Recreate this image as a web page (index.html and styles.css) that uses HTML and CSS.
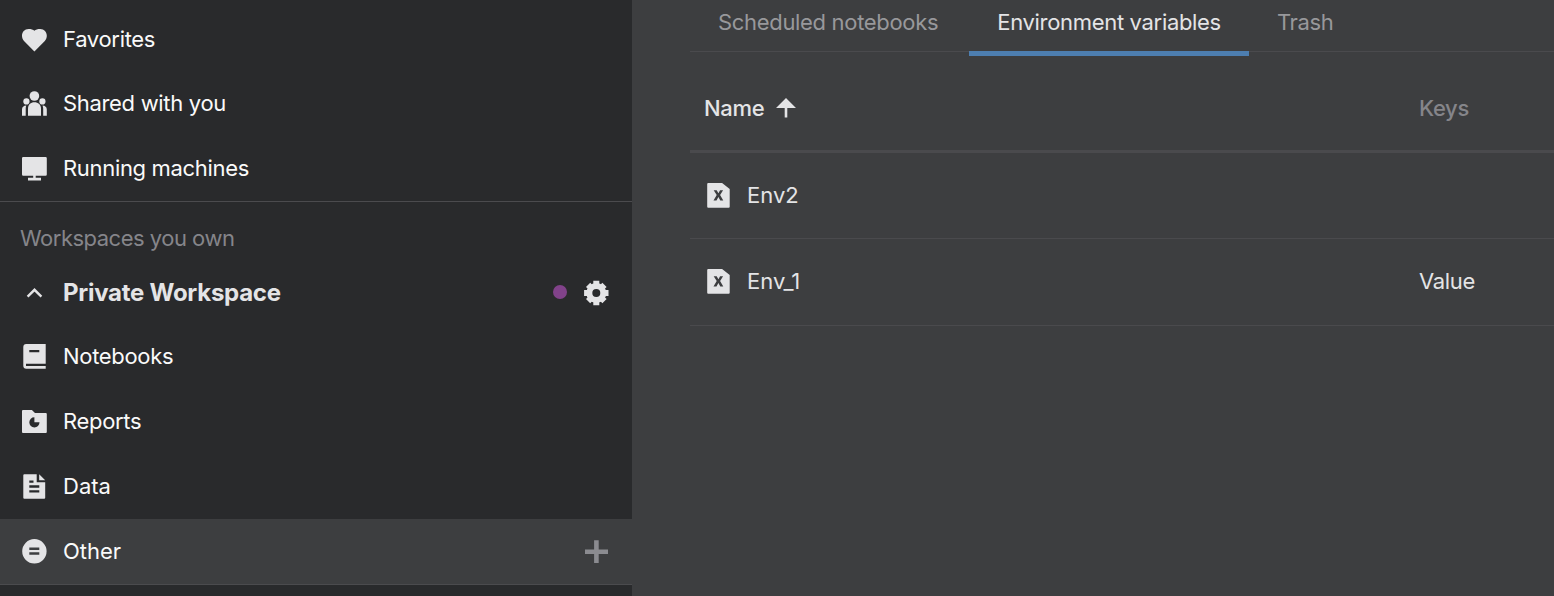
FILE: index.html
```
<!DOCTYPE html>
<html lang="en">
<head>
    <meta charset="UTF-8">
    <meta name="viewport" content="width=device-width, initial-scale=1.0">
    <title>Environment variables</title>
    <link rel="stylesheet" href="styles.css">
</head>
<body>
    <aside class="sidebar">
        <nav class="menu">
            <a class="menu-item first">
                <svg class="icon" viewBox="0 0 27 27"><path d="M13.4 25.5 3 15C-1.2 10.3 1.6 3 7.6 3c2.5 0 4.600.6 5.800 1.800 1.200-1.200 3.300-1.800 5.800-1.800 6 0 8.800 7.300 4.600 12z"/></svg>
                <span>Favorites</span>
            </a>
            <a class="menu-item">
                <svg class="icon" viewBox="0 0 27 27">
                    <circle cx="13.4" cy="6" r="4.8"/>
                    <circle cx="5.4" cy="11.4" r="3.1"/>
                    <circle cx="21.4" cy="11.4" r="3.1"/>
                    <path d="M7 25.7v-7c0-4 2.6-6.4 6.4-6.4s6.6 2.4 6.6 6.4v7z"/>
                    <path d="M1 25.7v-6.2c0-2.3 1.6-3.8 4.3-3.9-.4 1-.6 2-.6 3.1v7zM25.8 25.7v-6.2c0-2.3-1.6-3.8-4.3-3.9.4 1 .7 2 .7 3.1v7z"/>
                </svg>
                <span>Shared with you</span>
            </a>
            <a class="menu-item">
                <svg class="icon" viewBox="0 0 27 27"><path d="M2.2 2h22.4a1.2 1.2 0 0 1 1.2 1.2v16.3a1.2 1.2 0 0 1-1.2 1.2h-9.9v2H20v2.8H7v-2.8h5.2v-2h-10A1.2 1.2 0 0 1 1 19.5V3.2A1.2 1.2 0 0 1 2.2 2z"/></svg>
                <span>Running machines</span>
            </a>
        </nav>

        <section class="workspaces">
            <p class="label">Workspaces you own</p>
            <div class="workspace">
                <svg class="icon chevron" viewBox="0 0 27 27"><path d="m6.6 16.700 6.900-6.900 6.900 6.900"/></svg>
                <strong>Private Workspace</strong>
                <i class="dot"></i>
                <svg class="icon gear" viewBox="0 0 27 27">
                    <circle cx="13.300" cy="13" r="7"/>
                    <path d="M13.300.8v3.500M13.300 21.700v3.500M1.100 13h3.500M22 13h3.500M5.100 4.800l2.200 2.200M19.300 19l2.200 2.200M21.500 4.800 19.300 7M7.300 19l-2.200 2.200"/>
                </svg>
            </div>
            <a class="menu-item">
                <svg class="icon" viewBox="0 0 27 27"><path fill-rule="evenodd" d="M5.300 1h19.400v19.700H5v2.300h19.700v2.700H5.300a3 3 0 0 1-3-3V4a3 3 0 0 1 3-3zM8.300 7v2.300h10V7z"/></svg>
                <span>Notebooks</span>
            </a>
            <a class="menu-item">
                <svg class="icon" viewBox="0 0 27 27"><path fill-rule="evenodd" d="M2 2h8.900l3.100 3h10.800a1 1 0 0 1 1 1v18a1 1 0 0 1-1 1H2a1 1 0 0 1-1-1V3a1 1 0 0 1 1-1zM13.400 9.200a5.100 5.100 0 1 0 5.100 5.100h-5.100z"/></svg>
                <span>Reports</span>
            </a>
            <a class="menu-item short">
                <svg class="icon" viewBox="0 0 27 27">
                    <path fill-rule="evenodd" d="M3.300 1.300h12.400v8h8.500v15.500a1 1 0 0 1-1 1H3.300a1 1 0 0 1-1-1V2.300a1 1 0 0 1 1-1zM8.300 7.500v2.300h4.200V7.500zM8.300 12.300v2.400h10v-2.400zM8.300 17.200v2.400h10v-2.400z"/>
                    <path d="M18.200 1.300l6 6H18.200z"/>
                </svg>
                <span>Data</span>
            </a>
            <a class="menu-item short active">
                <svg class="icon" viewBox="0 0 27 27"><path fill-rule="evenodd" d="M13.4 1.100a12.200 12.200 0 1 0 0 24.400 12.200 12.200 0 0 0 0-24.400zM8.300 9.500v2.400h10V9.500zM8.300 14.300v2.400h10v-2.400z"/></svg>
                <span>Other</span>
                <svg class="icon plus" viewBox="0 0 27 27"><path d="M11.100 2.200h4.600v9.200H25V16h-9.300v9.100h-4.600V16H2v-4.600h9.100z"/></svg>
            </a>
        </section>
    </aside>

    <main class="content">
        <div class="tabs">
            <a class="tab">Scheduled notebooks</a>
            <a class="tab active">Environment variables</a>
            <a class="tab">Trash</a>
        </div>

        <div class="table">
            <div class="row head">
                <div class="cell">
                    Name
                    <svg class="arrow" viewBox="0 0 20 20"><path d="M10 0l10 10h-8.700V19.500H8.700V10H0z"/></svg>
                </div>
                <div class="cell muted">Keys</div>
            </div>
            <div class="row first">
                <div class="cell name">
                    <svg class="icon" viewBox="0 0 27 27"><path fill-rule="evenodd" d="M3.200 1h13.900l7.600 6v17.700a1 1 0 0 1-1 1H3.200a1 1 0 0 1-1-1V2a1 1 0 0 1 1-1zM8.700 8.200l3 4.900-3.200 5.300h3l1.900-3.300 1.900 3.300h3l-3.200-5.300 3-4.900h-3l-1.700 3-1.700-3z"/></svg>
                    <span>Env2</span>
                </div>
                <div class="cell"></div>
            </div>
            <div class="row last">
                <div class="cell name">
                    <svg class="icon" viewBox="0 0 27 27"><path fill-rule="evenodd" d="M3.200 1h13.900l7.600 6v17.700a1 1 0 0 1-1 1H3.200a1 1 0 0 1-1-1V2a1 1 0 0 1 1-1zM8.700 8.200l3 4.900-3.200 5.300h3l1.900-3.300 1.900 3.300h3l-3.200-5.300 3-4.900h-3l-1.700 3-1.700-3z"/></svg>
                    <span>Env_1</span>
                </div>
                <div class="cell"><span>Value</span></div>
            </div>
        </div>
    </main>
</body>
</html>
```
FILE: styles.css
```
* {
    box-sizing: border-box;
}

body {
    margin: 0;
    height: 596px;
    display: flex;
    overflow: hidden;
    background: #3d3e40;
    color: #e4e4e6;
    font-family: Inter, "Liberation Sans", sans-serif;
    font-size: 22px;
    line-height: 28px;
    letter-spacing: -0.32px;
}

.icon {
    width: 27px;
    height: 27px;
    flex: none;
    fill: #e4e4e6;
}

/* sidebar */
.sidebar {
    width: 632px;
    flex: none;
    background: #292a2c;
}

.menu {
    padding-top: 6px;
}

.menu-item {
    display: flex;
    align-items: center;
    gap: 15px;
    height: 65px;
    padding: 0 22px 0 21px;
    color: #fafafa;
}

.menu-item span {
    padding-bottom: 2px;
}

.menu-item.first {
    padding-top: 1px;
}

.menu-item.first span {
    padding-bottom: 0;
}

.menu-item.short {
    letter-spacing: 0;
}

.workspaces {
    border-top: 1px solid #4b4b4e;
    border-bottom: 1px solid #4b4b4e;
}

.label {
    margin: 0;
    padding: 22px 20px 10px;
    color: #85858a;
    letter-spacing: -0.5px;
}

.workspace {
    display: flex;
    align-items: center;
    height: 62px;
    padding: 0 22px 0 21px;
}

.workspace strong {
    flex: 1;
    margin-left: 15px;
    font-size: 24px;
    font-weight: 700;
    letter-spacing: -0.27px;
}

.chevron {
    fill: none;
    stroke: #e4e4e6;
    stroke-width: 2.4;
}

.gear {
    fill: none;
    stroke: #e4e4e6;
    stroke-width: 6;
}

.dot {
    width: 14px;
    height: 14px;
    margin: 0 16px 2px 0;
    border-radius: 50%;
    background: #81428a;
}

.menu-item.active {
    background: #3d3e40;
}

.plus {
    margin-left: auto;
    fill: #8b8b90;
}

/* content */
.content {
    flex: 1;
    padding-left: 58px;
}

.tabs {
    display: flex;
    height: 52px;
    border-bottom: 1px solid #4a4a4d;
}

.tab {
    height: 56px;
    padding: 8px 30px 0 28px;
    color: #98989b;
}

.tab.active {
    margin-left: 1px;
    padding-right: 28px;
    color: #e4e4e6;
    border-bottom: 5px solid #4d7eb0;
}

.row {
    display: grid;
    grid-template-columns: 715px 1fr;
    align-items: center;
    height: 87px;
    padding: 0 0 1px 14px;
    border-bottom: 1px solid #4a4a4d;
}

.row.first {
    height: 86px;
}

.row.last span {
    padding-bottom: 2px;
    display: block;
}

.row.head {
    height: 101px;
    padding: 14px 0 0 14px;
    border-bottom-width: 3px;
    font-weight: 500;
}

.row.head .cell {
    display: flex;
    align-items: center;
    gap: 12px;
}

.cell.name {
    display: flex;
    align-items: center;
    gap: 15px;
    padding-left: 1px;
    letter-spacing: 0;
}

.row .muted {
    color: #85858a;
}

.arrow {
    width: 20px;
    height: 20px;
    fill: #e4e4e6;
}
```
